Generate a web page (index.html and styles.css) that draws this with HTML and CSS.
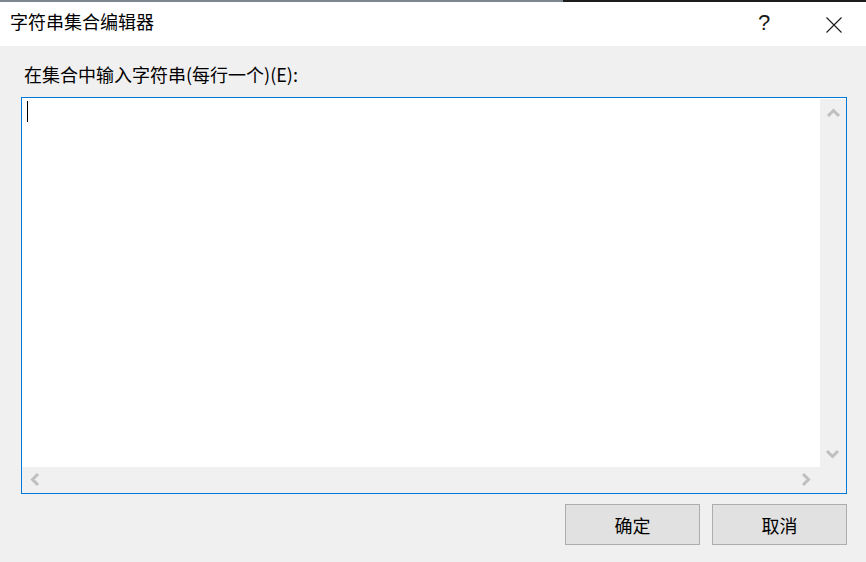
FILE: index.html
```html
<!DOCTYPE html>
<html lang="zh-CN">
<head>
<meta charset="utf-8">
<title>字符串集合编辑器</title>
<link rel="stylesheet" href="styles.css">
</head>
<body>
<div class="window">
  <div class="topline"><div class="seg-light"></div><div class="seg-dark"></div></div>
  <div class="titlebar">
    <div class="title">字符串集合编辑器</div>
    <div class="help">?</div>
    <div class="close">
      <svg width="16" height="16" viewBox="0 0 16 16"><path d="M0.5 0.5 L15.5 15.5 M15.5 0.5 L0.5 15.5" stroke="#1a1a1a" stroke-width="1.1" fill="none"/></svg>
    </div>
  </div>
  <div class="content">
    <div class="label">在集合中输入字符串(每行一个)(E):</div>
    <div class="editbox">
      <div class="textarea"><span class="caret"></span></div>
      <div class="vscroll">
        <div class="sbtn">
          <svg width="26" height="25" viewBox="0 0 26 25"><polyline points="8,17 13.5,11.5 19,17" fill="none" stroke="#bfbfbf" stroke-width="3"/></svg>
        </div>
        <div class="sbtn">
          <svg width="26" height="25" viewBox="0 0 26 25"><polyline points="7,9 12.5,14.5 18,9" fill="none" stroke="#bfbfbf" stroke-width="3"/></svg>
        </div>
      </div>
      <div class="hscroll">
        <div class="sbtn">
          <svg width="25" height="26" viewBox="0 0 25 26"><polyline points="16,7 10.5,12.5 16,18" fill="none" stroke="#bfbfbf" stroke-width="3"/></svg>
        </div>
        <div class="sbtn">
          <svg width="25" height="26" viewBox="0 0 25 26"><polyline points="8,7 13.5,12.5 8,18" fill="none" stroke="#bfbfbf" stroke-width="3"/></svg>
        </div>
      </div>
      <div class="corner"></div>
    </div>
    <div class="buttons">
      <button class="btn">确定</button>
      <button class="btn">取消</button>
    </div>
  </div>
</div>
</body>
</html>
```

FILE: styles.css
```css
html, body {
  margin: 0;
  padding: 0;
}
body {
  width: 866px;
  height: 562px;
  overflow: hidden;
  background: #f0f0f0;
  font-family: "Noto Sans CJK SC", "Noto Sans", sans-serif;
  font-size: 18px;
  color: #000;
}
.window {
  display: flex;
  flex-direction: column;
  height: 562px;
}
.topline {
  display: flex;
  height: 2px;
}
.seg-light {
  width: 563px;
  background: #7d8591;
}
.seg-dark {
  flex: 1;
  background: #1c1c1c;
}
.titlebar {
  height: 44px;
  background: #fff;
  display: flex;
  align-items: flex-start;
}
.title {
  flex: 1;
  padding: 7px 0 0 10px;
  line-height: 24px;
}
.help {
  width: 76px;
  text-align: center;
  font-family: "Liberation Sans", sans-serif;
  font-size: 22px;
  line-height: 24px;
  padding-top: 9px;
  color: #1a1a1a;
}
.close {
  width: 64px;
  display: flex;
  justify-content: center;
  padding-top: 15px;
}
.content {
  padding: 16px 0 0 21px;
  display: flex;
  flex-direction: column;
}
.label {
  line-height: 24px;
  padding-left: 3px;
  margin-bottom: 11px;
}
.editbox {
  box-sizing: border-box;
  width: 826px;
  height: 397px;
  border: 1px solid #0078d7;
  background: #fff;
  padding-top: 1px;
  display: grid;
  grid-template-columns: 1fr 26px;
  grid-template-rows: 1fr 26px;
}
.textarea {
  padding: 2px 0 0 5px;
}
.caret {
  display: block;
  width: 1px;
  height: 21px;
  background: #000;
}
.vscroll {
  background: #f0f0f0;
  display: flex;
  flex-direction: column;
  justify-content: space-between;
}
.hscroll {
  background: #f0f0f0;
  display: flex;
  justify-content: space-between;
}
.corner {
  background: #f0f0f0;
}
.sbtn {
  display: flex;
}
.buttons {
  width: 826px;
  display: flex;
  justify-content: flex-end;
  gap: 12px;
  margin-top: 10px;
}
.btn {
  box-sizing: border-box;
  width: 135px;
  height: 41px;
  border: 1px solid #adadad;
  background: #e1e1e1;
  font-family: "Noto Sans CJK SC", "Noto Sans", sans-serif;
  font-size: 18px;
  color: #000;
  padding: 0;
  margin: 0;
}
```
